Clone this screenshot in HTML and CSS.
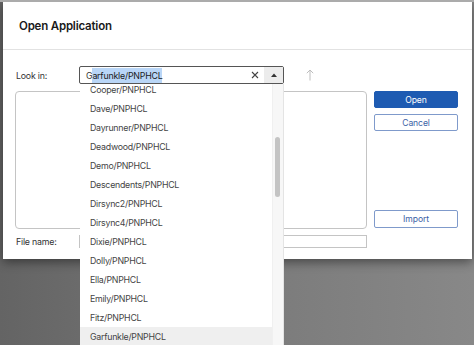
FILE: index.html
```html
<!DOCTYPE html>
<html lang="en">
<head>
  <meta charset="UTF-8" />
  <title>Open Application</title>
  <link rel="stylesheet" href="styles.css">
</head>
<body>

<div class="dialog">
  <div class="dialog-header">Open Application</div>
  <div class="dialog-body">
    <div class="look-row">
      <span class="label">Look in:</span>
      <div class="combo">
        <span class="combo-text">G<span class="sel">arfunkle/PNPHCL</span></span>
        <span class="combo-clear">
          <svg width="8" height="8" viewBox="0 0 8 8"><path d="M1 1L7 7M7 1L1 7" stroke="#444" stroke-width="1.1"/></svg>
        </span>
        <span class="combo-arrow">
          <svg width="6" height="4" viewBox="0 0 6 4"><path d="M0 4L3 0.5L6 4Z" fill="#333"/></svg>
        </span>
      </div>
      <span class="up-btn">
        <svg width="8" height="12" viewBox="0 0 8 12"><path d="M4 11.5V1M0.8 4.2L4 1L7.2 4.2" stroke="#bdbdbd" stroke-width="1" fill="none"/></svg>
      </span>
    </div>

    <div class="main-row">
      <div class="file-list"></div>
      <div class="actions">
        <button class="btn primary">Open</button>
        <button class="btn">Cancel</button>
        <button class="btn import">Import</button>
      </div>
    </div>

    <div class="file-row">
      <span class="label">File name:</span>
      <div class="name-input"></div>
    </div>
  </div>
</div>

<div class="dropdown">
  <div class="options">
    <div class="option">Cooper/PNPHCL</div>
    <div class="option">Dave/PNPHCL</div>
    <div class="option">Dayrunner/PNPHCL</div>
    <div class="option">Deadwood/PNPHCL</div>
    <div class="option">Demo/PNPHCL</div>
    <div class="option">Descendents/PNPHCL</div>
    <div class="option">Dirsync2/PNPHCL</div>
    <div class="option">Dirsync4/PNPHCL</div>
    <div class="option">Dixie/PNPHCL</div>
    <div class="option">Dolly/PNPHCL</div>
    <div class="option">Ella/PNPHCL</div>
    <div class="option">Emily/PNPHCL</div>
    <div class="option">Fitz/PNPHCL</div>
    <div class="option active">Garfunkle/PNPHCL</div>
  </div>
  <div class="scrollbar"><div class="thumb"></div></div>
</div>

</body>
</html>
```

FILE: styles.css
```css
html, body { height: 100%; }
body { margin: 0; font-family: Inter, "Noto Sans", sans-serif; color: #333; border-top: 2px solid #ababab; box-sizing: border-box; background: linear-gradient(to right, #646464, #7b7b7b 55%, #888); overflow: hidden; position: relative; }

.dialog { margin: 0 2px 0 3px; height: 257px; background: #fff; box-shadow: 0 3px 10px rgba(0,0,0,0.45); }
.dialog-header { height: 47px; border-bottom: 1px solid #e2e2e2; padding-left: 16px; display: flex; align-items: center; font-size: 11.5px; letter-spacing: -0.2px; font-weight: 600; color: #1a1a1a; }
.dialog-body { padding: 16px 13px 0 12px; }

.label { width: 64px; padding-left: 1px; box-sizing: border-box; font-size: 8.8px; letter-spacing: -0.2px; color: #333; flex: none; }

.look-row { display: flex; align-items: center; height: 18px; }
.combo { width: 205px; height: 18px; box-sizing: border-box; border: 1px solid #555; border-radius: 2px; display: flex; align-items: center; padding-left: 6px; }
.combo-text { flex: 1; font-size: 8.8px; letter-spacing: -0.2px; color: #333; }
.sel { background: #b9d6f7; color: #1a1a1a; padding: 2px 0; }
.combo-clear { width: 16px; display: flex; justify-content: center; margin-right: 1px; }
.combo-arrow { width: 19px; align-self: stretch; background: #ececec; display: flex; align-items: center; justify-content: center; }
.up-btn { margin-left: 22px; display: flex; }

.main-row { display: flex; margin-top: 7px; height: 138px; }
.file-list { width: 352px; box-sizing: border-box; border: 1px solid #c4c4c4; border-radius: 4px; }
.actions { margin-left: 7px; width: 84px; display: flex; flex-direction: column; gap: 6px; }
.btn { height: 17px; box-sizing: border-box; border: 1px solid #7f9acb; border-radius: 2px; background: #fff; color: #3b62a6; font-family: Inter, "Noto Sans", sans-serif; font-size: 8.6px; letter-spacing: -0.1px; padding: 0; }
.btn.primary { background: #1e5bb2; border-color: #1e5bb2; color: #fff; }
.btn.import { margin-top: auto; height: 18px; margin-bottom: 1px; }

.file-row { display: flex; align-items: center; margin-top: 6px; }
.name-input { width: 288px; height: 13px; box-sizing: border-box; border: 1px solid #c4c4c4; }

.dropdown { position: absolute; left: 80px; top: 82px; width: 204px; bottom: 0; background: #fff; overflow: hidden; display: flex; border-right: 1px solid #e4e4e4; box-sizing: border-box; }
.options { flex: 1; margin-top: -4px; }
.option { height: 19px; display: flex; align-items: center; padding-left: 10px; font-size: 8.8px; letter-spacing: -0.25px; color: #444; }
.option.active { background: #efefef; }
.scrollbar { width: 10px; background: #f7f7f7; border-left: 1px solid #f0f0f0; position: relative; }
.thumb { position: absolute; left: 2px; top: 53px; width: 5px; height: 60px; border-radius: 3px; background: #c4c4c4; }
```
